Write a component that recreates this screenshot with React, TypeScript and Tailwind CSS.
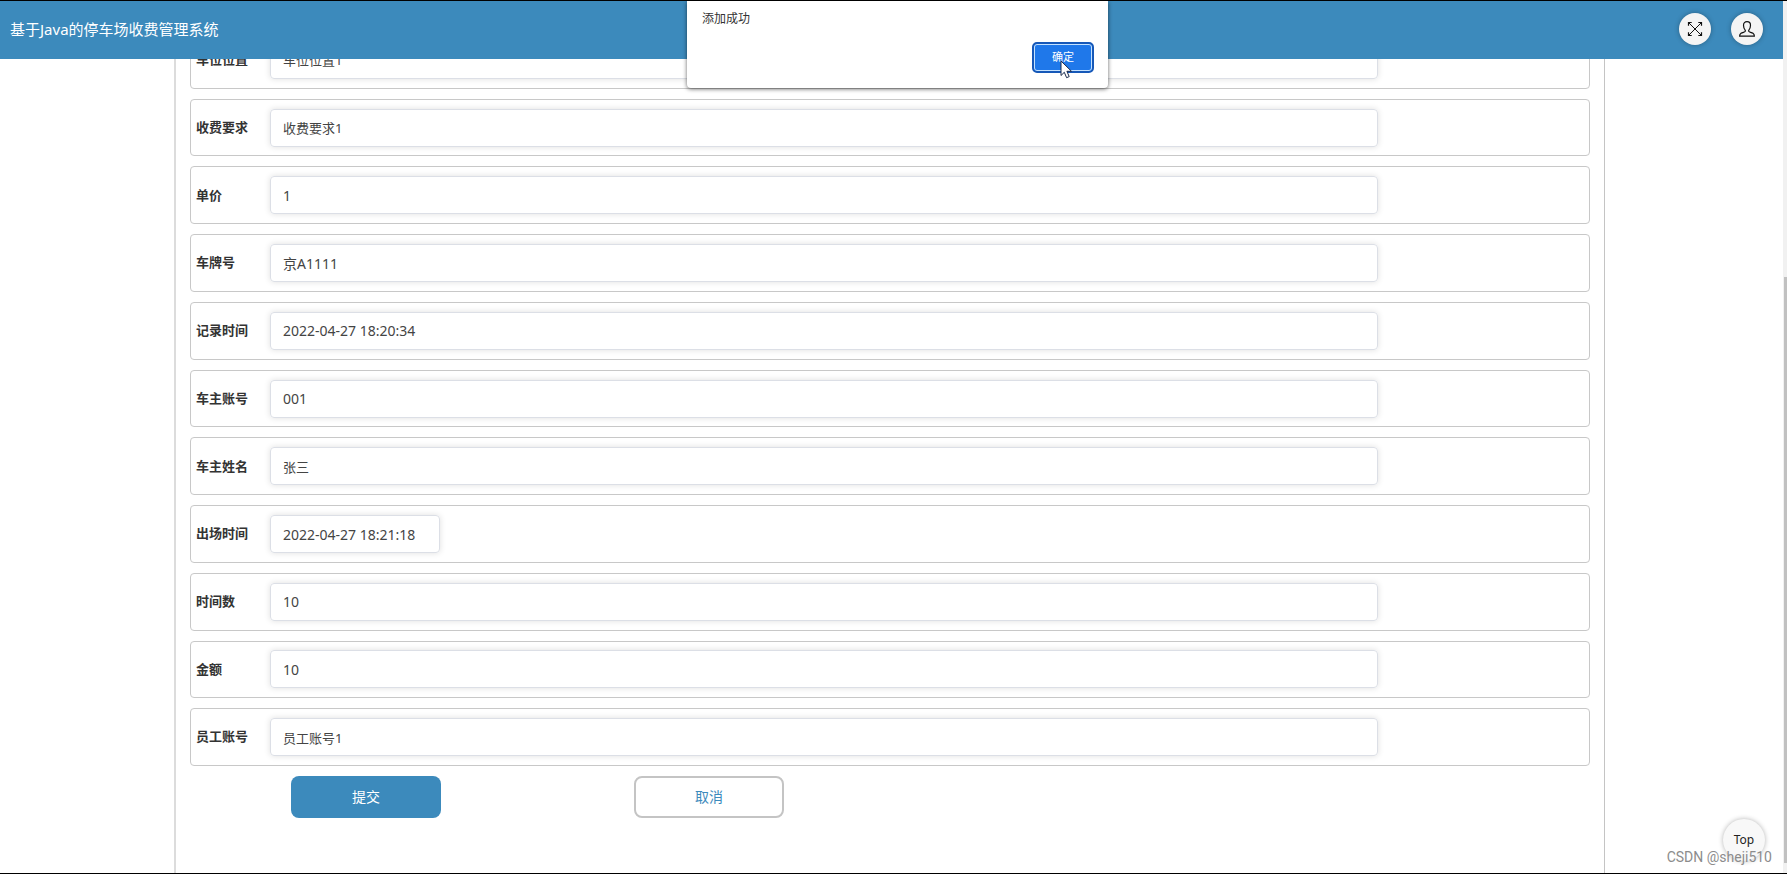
import { useState } from "react";

const campos = [
  { id: "weizhi", label: "车位位置", value: "车位位置1" },
  { id: "yaoqiu", label: "收费要求", value: "收费要求1" },
  { id: "danjia", label: "单价", value: "1", numeric: true },
  { id: "chepai", label: "车牌号", value: "京A1111", numeric: true },
  { id: "jilu", label: "记录时间", value: "2022-04-27 18:20:34", numeric: true },
  { id: "zhanghao", label: "车主账号", value: "001", numeric: true },
  { id: "xingming", label: "车主姓名", value: "张三" },
  { id: "chuchang", label: "出场时间", value: "2022-04-27 18:21:18", numeric: true, short: true },
  { id: "shijian", label: "时间数", value: "10", numeric: true },
  { id: "jine", label: "金额", value: "10", numeric: true },
  { id: "yuangong", label: "员工账号", value: "员工账号1" },
];

function Header() {
  return (
    <header className="relative z-10 flex h-[59px] shrink-0 items-center justify-between border-t border-black bg-[#3c8abc] pl-[10px] pr-5">
      <h1 className="pb-[2px] text-[15px] text-white">基于Java的停车场收费管理系统</h1>
      <div className="flex gap-5 pb-[2px]">
        <button
          type="button"
          aria-label="全屏"
          className="flex size-8 items-center justify-center rounded-full bg-[#f4f4f4] text-[#111] shadow-[0_0_5px_rgba(0,0,0,0.3)]"
        >
          <svg width="16" height="16" viewBox="0 0 16 16" fill="none" stroke="currentColor">
            <path d="M1.500 1.500l13 13M14.500 1.500l-13 13" />
            <path d="M1.500 4.700V1.500H4.700M11.300 1.500h3.200V4.700M14.500 11.300v3.200H11.300M4.700 14.500H1.500V11.300" strokeWidth="1.200" />
          </svg>
        </button>
        <button
          type="button"
          aria-label="用户"
          className="flex size-8 items-center justify-center rounded-full bg-[#f4f4f4] text-[#111] shadow-[0_0_5px_rgba(0,0,0,0.3)]"
        >
          <svg width="16" height="16" viewBox="0 0 16 16" fill="none" stroke="currentColor" strokeWidth="1.200" strokeLinejoin="round">
            <path d="M6.300 9.300C5 8 4.500 6.300 4.500 4.300 4.500 1.900 5.900.7 8 .7s3.500 1.200 3.500 3.600c0 2-.5 3.700-1.800 5v1c0 .8 2.700 1 4.300 2 1 .7 1.400 1.700 1.400 2.900H.6c0-1.200.4-2.200 1.400-2.900 1.600-1 4.300-1.200 4.300-2z" />
          </svg>
        </button>
      </div>
    </header>
  );
}

function Dialog({ onClose }: { onClose: () => void }) {
  return (
    <div className="absolute inset-x-0 top-px z-20 flex justify-center pl-2">
      <div
        role="alertdialog"
        aria-labelledby="mensaje"
        className="flex h-[87px] w-[421px] flex-col justify-between rounded-b-[4px] bg-white px-[14px] pb-[15px] pt-2 shadow-[0_1px_4px_rgba(0,0,0,0.6)]"
      >
        <p id="mensaje" className="pl-px text-xs leading-5 text-[#333]">
          添加成功
        </p>
        <button
          type="button"
          onClick={onClose}
          className="relative h-[31px] w-[62px] self-end rounded-[5px] border-2 border-[#1658b8] bg-[#1f78ea] text-[11px] text-white ring-1 ring-inset ring-[#c4e2ff]"
        >
          确定
          <svg className="absolute left-[26px] top-[16px]" width="13" height="20" viewBox="0 0 13 20">
            <path
              d="M1 1v14.500l3.300-3.200 2.300 5.400 2.600-1.100-2.300-5.300h4.600z"
              fill="#fff"
              stroke="#1b2a4a"
            />
          </svg>
        </button>
      </div>
    </div>
  );
}

function App() {
  const [isDialogVisible, setIsDialogVisible] = useState(true);

  return (
    <div className="relative flex h-screen overflow-hidden border-b border-black bg-white font-['Noto_Sans','Noto_Sans_CJK_SC',sans-serif]">
      <div className="flex min-w-0 flex-1 flex-col">
        <Header />
        <main className="-mt-7 ml-[174px] mr-[178px] flex flex-1 flex-col border-l-2 border-r border-l-[#dcdcdc] border-r-[#c4c4c4] pl-[14px] pr-[14px]">
          <form className="flex flex-1 flex-col gap-[10px]" onSubmit={(e) => e.preventDefault()}>
            {campos.map((campo) => (
              <div
                key={campo.id}
                className="flex flex-1 items-center rounded-[4px] border border-[#c8c8c8] pl-[5px]"
              >
                <label htmlFor={campo.id} className="w-[74px] shrink-0 text-[13px] font-bold text-[#333]">
                  {campo.label}
                </label>
                <input
                  id={campo.id}
                  defaultValue={campo.value}
                  className={`h-[38px] rounded-[4px] border border-[#dcdfe6] px-3 text-[#444] shadow-[0_0_6px_rgba(0,0,0,0.13)] outline-none ${
                    campo.short ? "w-[170px]" : "mr-[211px] min-w-0 flex-1"
                  } ${campo.numeric ? "text-sm" : "text-[13px]"}`}
                />
              </div>
            ))}
            <div className="mb-[55px] flex gap-[193px] pl-[101px]">
              <button type="submit" className="h-[42px] w-[150px] rounded-[8px] bg-[#3c8abc] text-sm text-white">
                提交
              </button>
              <button
                type="button"
                className="h-[42px] w-[150px] rounded-[8px] border-2 border-[#c4c4c4] bg-white text-sm text-[#3c8abc]"
              >
                取消
              </button>
            </div>
          </form>
        </main>
      </div>
      <div className="flex w-[4px] flex-col border-t border-black bg-[#f1f1f1] pb-[10px] pt-[276px]">
        <div className="ml-px flex-1 bg-[#c1c1c1]" />
      </div>
      <a
        href="#"
        className="absolute bottom-3 right-[22px] flex size-[42px] items-center justify-center rounded-full bg-[#f8f8f8] text-xs text-[#222] shadow-[0_0_5px_rgba(0,0,0,0.3)]"
      >
        Top
      </a>
      <span className="absolute bottom-[6px] right-[15px] font-['Roboto',sans-serif] text-sm text-[#8c8c8c]">
        CSDN @sheji510
      </span>
      {isDialogVisible && <Dialog onClose={() => setIsDialogVisible(false)} />}
    </div>
  );
}

export default App;
